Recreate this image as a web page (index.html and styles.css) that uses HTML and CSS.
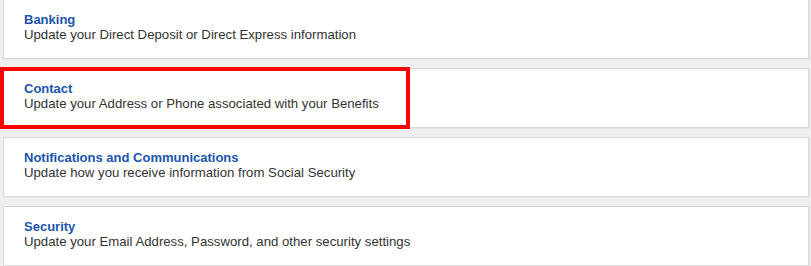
FILE: index.html
```html
<!DOCTYPE html>
<html lang="en">
<head>
    <meta charset="UTF-8">
    <meta name="viewport" content="width=device-width, initial-scale=1.0">
    <title>Settings</title>
    <link rel="stylesheet" href="styles.css">
</head>
<body>
    <div class="settings-list">
        <a class="settings-card" href="#">
            <span class="card-title">Banking</span>
            <span class="card-desc">Update your Direct Deposit or Direct Express information</span>
        </a>
        <!-- highlighted one -->
        <a class="settings-card" href="#">
            <span class="card-title">Contact</span>
            <span class="card-desc">Update your Address or Phone associated with your Benefits</span>
            <span class="highlight"></span>
        </a>
        <a class="settings-card" href="#">
            <span class="card-title">Notifications and Communications</span>
            <span class="card-desc">Update how you receive information from Social Security</span>
        </a>
        <a class="settings-card" href="#">
            <span class="card-title">Security</span>
            <span class="card-desc">Update your Email Address, Password, and other security settings</span>
        </a>
    </div>
</body>
</html>
```

FILE: styles.css
```css
body {
    margin: 0;
    background-color: #efefef;
    font-family: Arial, "Liberation Sans", sans-serif;
}
.settings-list {
    display: flex;
    flex-direction: column;
    gap: 9px;
    margin-top: -1px;
    padding: 0 2px 0 3px;
}
.settings-card {
    position: relative;
    display: flex;
    flex-direction: column;
    height: 60px;
    padding: 12px 20px 0 20px;
    box-sizing: border-box;
    background-color: #fff;
    border: 1px solid #d9d9d9;
    box-shadow: 1px 1px 0 #e6e6e6;
    text-decoration: none;
}
.card-title {
    font-size: 13px;
    font-weight: bold;
    color: #1b54ae;
    line-height: 15px;
}
.card-desc {
    font-size: 13.2px;
    color: #333;
    line-height: 15px;
}
.highlight {
    position: absolute;
    left: -4px;
    top: -2px;
    width: 402px;
    height: 54px;
    border: 4px solid #ff0000;
}
```
